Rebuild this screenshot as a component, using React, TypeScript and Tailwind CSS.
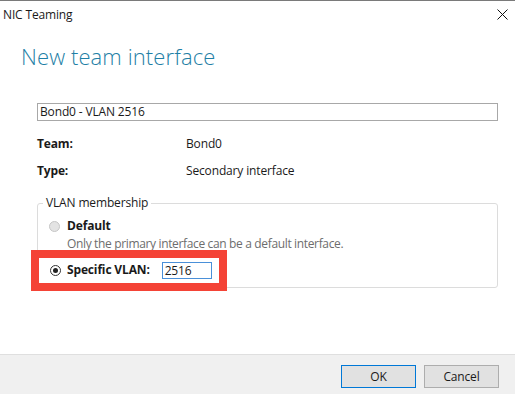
import React from "react";

function Radio({ checked, disabled }: { checked?: boolean; disabled?: boolean }) {
  return (
    <span
      className={
        "flex h-[11px] w-[11px] shrink-0 items-center justify-center rounded-full border " +
        (disabled ? "border-[#c6c6c6] bg-[#e3e3e3]" : "border-[#333333] bg-white")
      }
    >
      {checked && <span className="h-[5px] w-[5px] rounded-full bg-[#222222]" />}
    </span>
  );
}

export default function App() {
  return (
    <div
      className="flex h-[394px] w-[515px] flex-col border-t border-[#7a7a7a] bg-white text-[12px] tracking-[-0.15px] text-[#1a1a1a] [font-family:'Open_Sans','Noto_Sans',sans-serif]"
    >
      <div className="flex h-[27px] shrink-0 items-center justify-between pl-[3px] pr-[6px]">
        <span className="leading-[16px]">NIC Teaming</span>
        <svg width="11" height="11" viewBox="0 0 11 11" className="mr-[1px]">
          <path d="M0.5 0.5 L10.5 10.5 M10.5 0.5 L0.5 10.5" stroke="#111" strokeWidth="1" />
        </svg>
      </div>

      <div className="flex flex-col pl-[37px] pr-[17px]">
        <h1 className="-ml-[16px] mt-[12px] text-[22px] font-light leading-[32px] tracking-[0.1px] text-[#1f7fa6]">
          New team interface
        </h1>

        <div className="mt-[31px] flex h-[18px] items-center border border-[#a8a8a8] px-[2px] leading-[16px]">
          Bond0 - VLAN 2516
        </div>

        <div className="mt-[14px] flex h-[18px] items-center leading-[18px]">
          <span className="w-[149px] font-bold">Team:</span>
          <span>Bond0</span>
        </div>
        <div className="mt-[9px] flex h-[18px] items-center leading-[18px]">
          <span className="w-[149px] font-bold">Type:</span>
          <span>Secondary interface</span>
        </div>

        <fieldset className="mt-[15px] rounded-[3px] border border-[#dcdcdc] pb-[8px]">
          <legend className="ml-[5px] px-[3px] leading-[16px]">VLAN membership</legend>
          <div className="mt-[6px] flex h-[18px] items-center gap-[7px] pl-[11px]">
            <Radio disabled />
            <span className="font-bold leading-[18px]">Default</span>
          </div>
          <div className="mt-[1px] pl-[29px] leading-[16px] tracking-[-0.35px] text-[#6d6d6d]">
            Only the primary interface can be a default interface.
          </div>
          <div className="relative mt-[9px] flex h-[18px] items-center pl-[12px]">
            <div className="absolute left-[-7px] top-[-11px] h-[41px] w-[196px] border-[8px] border-[#f44336]" />
            <Radio checked />
            <span className="relative ml-[6px] font-bold leading-[18px]">Specific VLAN:</span>
            <div className="relative ml-[12px] flex h-[17px] w-[50px] items-center border border-[#4a90d9] px-[2px] leading-[15px]">
              2516
            </div>
          </div>
        </fieldset>
      </div>

      <div className="mt-auto flex h-[40px] shrink-0 justify-end gap-[8px] border-t border-[#dfdfdf] bg-[#f0f0f0] pr-[16px] pt-[10px]">
        <button className="flex h-[23px] w-[75px] items-center justify-center border border-[#0078d7] bg-[#e1e1e1]">
          OK
        </button>
        <button className="flex h-[23px] w-[75px] items-center justify-center border border-[#adadad] bg-[#e1e1e1]">
          Cancel
        </button>
      </div>
    </div>
  );
}
